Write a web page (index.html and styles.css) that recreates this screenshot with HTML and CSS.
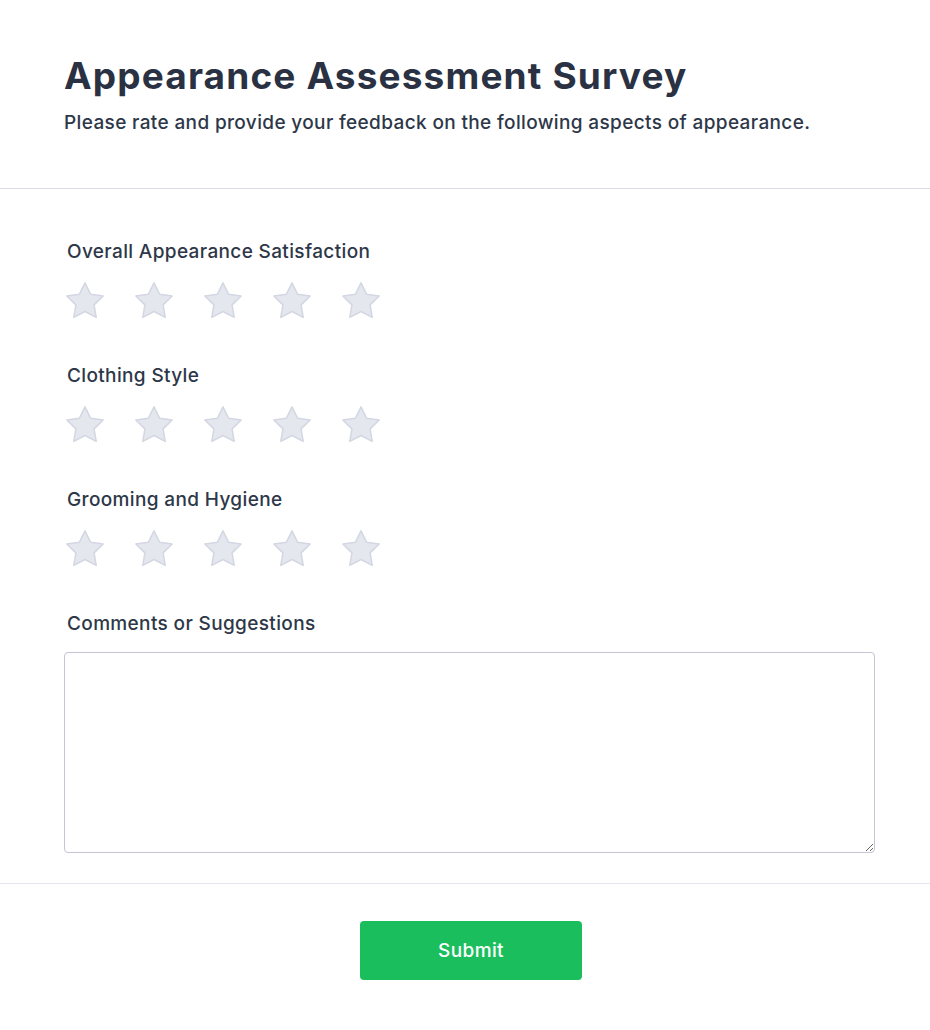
FILE: index.html
```html
<!DOCTYPE html>
<html lang="en">
<head>
<meta charset="utf-8">
<title>Appearance Assessment Survey</title>
<link rel="stylesheet" href="styles.css">
</head>
<body>
<div class="survey">
  <header class="survey-header">
    <h1 class="title">Appearance Assessment Survey</h1>
    <p class="subtitle">Please rate and provide your feedback on the following aspects of appearance.</p>
  </header>
  <main class="survey-body">
    <section class="question">
      <h2 class="label">Overall Appearance Satisfaction</h2>
      <div class="stars">
        <svg class="star" viewBox="1 1 22 22"><path d="M12 2.5l2.94 5.96 6.56.96-4.75 4.63 1.12 6.54L12 17.5l-5.87 3.09 1.12-6.54L2.5 9.42l6.56-.96z"/></svg>
        <svg class="star" viewBox="1 1 22 22"><path d="M12 2.5l2.94 5.96 6.56.96-4.75 4.63 1.12 6.54L12 17.5l-5.87 3.09 1.12-6.54L2.5 9.42l6.56-.96z"/></svg>
        <svg class="star" viewBox="1 1 22 22"><path d="M12 2.5l2.94 5.96 6.56.96-4.75 4.63 1.12 6.54L12 17.5l-5.87 3.09 1.12-6.54L2.5 9.42l6.56-.96z"/></svg>
        <svg class="star" viewBox="1 1 22 22"><path d="M12 2.5l2.94 5.96 6.56.96-4.75 4.63 1.12 6.54L12 17.5l-5.87 3.09 1.12-6.54L2.5 9.42l6.56-.96z"/></svg>
        <svg class="star" viewBox="1 1 22 22"><path d="M12 2.5l2.94 5.96 6.56.96-4.75 4.63 1.12 6.54L12 17.5l-5.87 3.09 1.12-6.54L2.5 9.42l6.56-.96z"/></svg>
      </div>
    </section>
    <section class="question">
      <h2 class="label">Clothing Style</h2>
      <div class="stars">
        <svg class="star" viewBox="1 1 22 22"><path d="M12 2.5l2.94 5.96 6.56.96-4.75 4.63 1.12 6.54L12 17.5l-5.87 3.09 1.12-6.54L2.5 9.42l6.56-.96z"/></svg>
        <svg class="star" viewBox="1 1 22 22"><path d="M12 2.5l2.94 5.96 6.56.96-4.75 4.63 1.12 6.54L12 17.5l-5.87 3.09 1.12-6.54L2.5 9.42l6.56-.96z"/></svg>
        <svg class="star" viewBox="1 1 22 22"><path d="M12 2.5l2.94 5.96 6.56.96-4.75 4.63 1.12 6.54L12 17.5l-5.87 3.09 1.12-6.54L2.5 9.42l6.56-.96z"/></svg>
        <svg class="star" viewBox="1 1 22 22"><path d="M12 2.5l2.94 5.96 6.56.96-4.75 4.63 1.12 6.54L12 17.5l-5.87 3.09 1.12-6.54L2.5 9.42l6.56-.96z"/></svg>
        <svg class="star" viewBox="1 1 22 22"><path d="M12 2.5l2.94 5.96 6.56.96-4.75 4.63 1.12 6.54L12 17.5l-5.87 3.09 1.12-6.54L2.5 9.42l6.56-.96z"/></svg>
      </div>
    </section>
    <section class="question">
      <h2 class="label">Grooming and Hygiene</h2>
      <div class="stars">
        <svg class="star" viewBox="1 1 22 22"><path d="M12 2.5l2.94 5.96 6.56.96-4.75 4.63 1.12 6.54L12 17.5l-5.87 3.09 1.12-6.54L2.5 9.42l6.56-.96z"/></svg>
        <svg class="star" viewBox="1 1 22 22"><path d="M12 2.5l2.94 5.96 6.56.96-4.75 4.63 1.12 6.54L12 17.5l-5.87 3.09 1.12-6.54L2.5 9.42l6.56-.96z"/></svg>
        <svg class="star" viewBox="1 1 22 22"><path d="M12 2.5l2.94 5.96 6.56.96-4.75 4.63 1.12 6.54L12 17.5l-5.87 3.09 1.12-6.54L2.5 9.42l6.56-.96z"/></svg>
        <svg class="star" viewBox="1 1 22 22"><path d="M12 2.5l2.94 5.96 6.56.96-4.75 4.63 1.12 6.54L12 17.5l-5.87 3.09 1.12-6.54L2.5 9.42l6.56-.96z"/></svg>
        <svg class="star" viewBox="1 1 22 22"><path d="M12 2.5l2.94 5.96 6.56.96-4.75 4.63 1.12 6.54L12 17.5l-5.87 3.09 1.12-6.54L2.5 9.42l6.56-.96z"/></svg>
      </div>
    </section>
    <section class="question">
      <h2 class="label">Comments or Suggestions</h2>
      <textarea class="comments"></textarea>
    </section>
  </main>
  <footer class="survey-footer">
    <button class="submit" type="button">Submit</button>
  </footer>
</div>
</body>
</html>
```
FILE: styles.css
```css
* { box-sizing: border-box; }
html, body { margin: 0; padding: 0; background: #ffffff; }
body {
  font-family: Inter, "Noto Sans", sans-serif;
  color: #2d3748;
}
.survey-header {
  padding: 52px 55px 51px 64px;
  border-bottom: 1px solid #dcdce8;
}
.title {
  margin: 0;
  font-size: 37px;
  line-height: 48px;
  font-weight: 700;
  letter-spacing: 1.15px;
  color: #2a3142;
}
.subtitle {
  margin: 9px 0 0;
  font-size: 19px;
  line-height: 28px;
  font-weight: 500;
  letter-spacing: 0.36px;
  color: #2d3748;
}
.survey-body {
  padding: 50px 55px 30px 64px;
  display: flex;
  flex-direction: column;
  gap: 41px;
}
.question { display: flex; flex-direction: column; }
.label {
  margin: 0 0 0 3px;
  font-size: 19px;
  line-height: 26px;
  font-weight: 500;
  letter-spacing: 0.36px;
  color: #2d3748;
}
.stars {
  display: flex;
  gap: 27px;
  margin-top: 15px;
}
.star {
  width: 42px;
  height: 42px;
  display: block;
}
.star path {
  fill: #e5e7ef;
  stroke: #d3d7e2;
  stroke-width: 0.8;
  stroke-linejoin: round;
}
.comments {
  margin-top: 15px;
  width: 811px;
  height: 201px;
  border: 1px solid #c3c5d4;
  border-radius: 4px;
  font-family: inherit;
  font-size: 16px;
  display: block;
  resize: vertical;
}
.survey-footer {
  border-top: 1px solid #e6e6ee;
  padding: 37px 52px 40px 64px;
  display: flex;
  justify-content: center;
}
.submit {
  width: 222px;
  height: 59px;
  background: #1bbe5d;
  color: #ffffff;
  border: none;
  border-radius: 4px;
  font-family: inherit;
  font-size: 19px;
  font-weight: 500;
  letter-spacing: 0.4px;
}
```
